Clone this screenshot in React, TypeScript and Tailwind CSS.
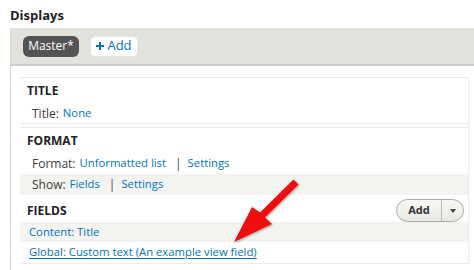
import React from 'react';

const Sep = () => <span className="ml-[9px] mr-[6px] text-[12px] text-[#444]">|</span>;

const Row: React.FC<{ shaded?: boolean; indent?: string; children: React.ReactNode }> = ({ shaded, indent = 'pl-[12px]', children }) => (
  <div className={`flex items-center ${indent} ${shaded ? 'bg-[#f3f3ef]' : 'bg-white'}`}>{children}</div>
);

const Label: React.FC<{ children: React.ReactNode }> = ({ children }) => (
  <span className="mr-[4px] text-[12px] text-[#3b3b3b]">{children}</span>
);

const A: React.FC<{ children: React.ReactNode; underline?: boolean }> = ({ children, underline }) => (
  <span className={`text-[11.3px] text-[#0074bd] ${underline ? 'underline underline-offset-2' : ''}`}>{children}</span>
);

export default function App() {
  return (
    <div className="relative w-[474px] h-[270px] overflow-hidden bg-white font-['Open_Sans',sans-serif] text-[12px] text-[#222]">
      <h2 className="h-[28px] pl-[10px] pt-[6px] text-[13px] font-bold leading-[18px] text-[#222]">Displays</h2>

      <div className="ml-[10px] h-[242px] border-l border-[#d9d9d6]">
        {/* display tabs */}
        <div className="flex h-[38px] items-center gap-[11px] border-b-2 border-[#cbcbc5] bg-[#e2e1dc] pl-[12px]">
          <div className="flex h-[21px] w-[56px] items-center justify-center rounded-[6px] bg-[#545454] text-[12px] text-white">Master*</div>
          <div className="flex h-[21px] w-[48px] items-center justify-center gap-[3px] rounded-[5px] border border-[#e6e6e2] bg-white text-[13px] text-[#0074bd]">
            <svg width="8" height="8" viewBox="0 0 8 8">
              <path d="M3 0h2v3h3v2H5v3H3V5H0V3h3z" fill="#0074bd" />
            </svg>
            <span>Add</span>
          </div>
        </div>

        <div className="mt-[11px] ml-[9px] mr-[5px] border-r border-[#ebebeb]">
          {/* TITLE */}
          <div className="flex flex-col border-t border-b border-[#ececec]">
            <div className="flex h-[26px] items-center pl-[7px] font-bold">TITLE</div>
            <Row>
              <div className="flex h-[19px] items-center"><Label>Title:</Label><A>None</A></div>
            </Row>
          </div>

          {/* FORMAT */}
          <div className="mt-[3px] flex flex-col border-t border-b border-[#ececec]">
            <div className="flex h-[25px] items-center pl-[7px] font-bold">FORMAT</div>
            <Row>
              <div className="flex h-[21px] items-center"><Label>Format:</Label><A>Unformatted list</A><Sep /><A>Settings</A></div>
            </Row>
            <Row shaded>
              <div className="flex h-[21px] items-center"><Label>Show:</Label><A>Fields</A><Sep /><A>Settings</A></div>
            </Row>

            {/* FIELDS */}
            <div className="flex h-[27px] items-center justify-between pt-[4px] pl-[7px] pr-[4px]">
              <span className="font-bold">FIELDS</span>
              <div className="flex h-[23px] w-[68px] items-stretch rounded-full border border-[#a8a8a4] bg-gradient-to-b from-[#f7f7f4] to-[#e9e9e4] text-[11px] font-bold text-[#333]">
                <span className="flex w-[44px] items-center justify-center">Add</span>
                <span className="flex flex-1 items-center justify-center border-l border-[#b9b9b5]">
                  <svg width="6" height="4" viewBox="0 0 6 4"><path d="M0 0h6L3 4z" fill="#444" /></svg>
                </span>
              </div>
            </div>
            <Row shaded indent="pl-[9px]">
              <div className="flex h-[20px] items-center"><A>Content: Title</A></div>
            </Row>
            <Row indent="pl-[9px]">
              <div className="flex h-[21px] items-center"><A underline>Global: Custom text (An example view field)</A></div>
            </Row>
          </div>
        </div>
      </div>

      {/* red annotation arrow */}
      <svg className="pointer-events-none absolute inset-0" width="474" height="270" viewBox="0 0 474 270">
        <defs>
          <filter id="sh" x="-20%" y="-20%" width="140%" height="140%">
            <feDropShadow dx="1" dy="1" stdDeviation="1" floodColor="#000" floodOpacity="0.35" />
          </filter>
        </defs>
        <polygon
          points="293.5,179.5 260,212.5 252,207 234,242 272,224 265,217.5 298.5,184.5"
          fill="#f20a0a"
          filter="url(#sh)"
        />
      </svg>
    </div>
  );
}
